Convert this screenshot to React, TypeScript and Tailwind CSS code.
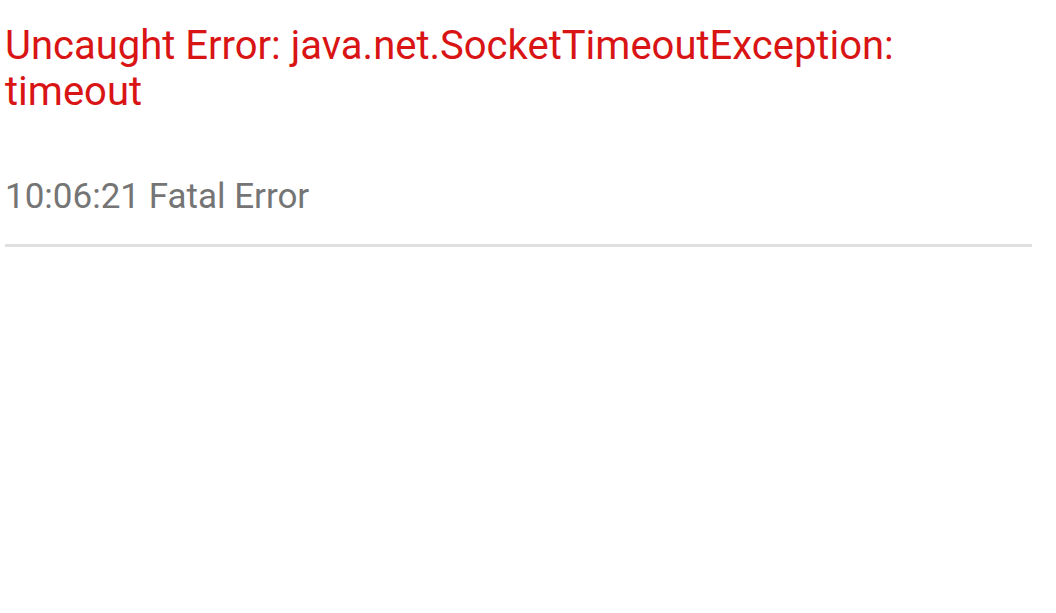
export default function App() {
  return (
    <div className="min-h-screen bg-white px-[5px] pt-[23px] font-['Roboto',sans-serif]">
      <div className="w-[1027px]">
        <h1 className="text-[40px] leading-[46px] text-[#d91414]">
          Uncaught Error: java.net.SocketTimeoutException:
          <br />
          timeout
        </h1>
        <p className="mt-[60px] text-[35px] leading-[44px] text-[#757575]">
          10:06:21 Fatal Error
        </p>
        <div className="mt-[25px] h-[3px] bg-[#e0e0e0]" />
      </div>
    </div>
  );
}
